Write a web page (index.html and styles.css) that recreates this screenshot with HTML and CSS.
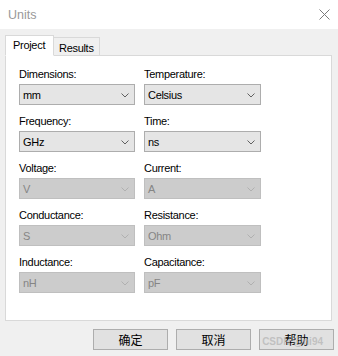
FILE: index.html
```html
<!DOCTYPE html>
<html lang="en">
<head>
    <meta charset="UTF-8">
    <meta name="viewport" content="width=device-width, initial-scale=1.0">
    <title>Units</title>
    <link rel="stylesheet" href="styles.css">
</head>
<body>
    <div class="titlebar">
        <span class="title">Units</span>
        <svg class="close" width="11" height="11" viewBox="0 0 11 11">
            <path d="M0.5 0.5 L10.5 10.5 M10.5 0.5 L0.5 10.5" stroke="#7a7a7a" stroke-width="1" fill="none"/>
        </svg>
    </div>
    <div class="dialog">
        <div class="tabs">
            <div class="tab active">Project</div>
            <div class="tab">Results</div>
        </div>
        <div class="panel">
            <div class="fields">
                <div class="field">
                    <label>Dimensions:</label>
                    <div class="combo"><span>mm</span><svg class="chev" width="8" height="5" viewBox="0 0 8 5"><polyline points="0.5,0.5 4,4 7.5,0.5"/></svg></div>
                </div>
                <div class="field">
                    <label>Temperature:</label>
                    <div class="combo"><span>Celsius</span><svg class="chev" width="8" height="5" viewBox="0 0 8 5"><polyline points="0.5,0.5 4,4 7.5,0.5"/></svg></div>
                </div>
                <div class="field">
                    <label>Frequency:</label>
                    <div class="combo"><span>GHz</span><svg class="chev" width="8" height="5" viewBox="0 0 8 5"><polyline points="0.5,0.5 4,4 7.5,0.5"/></svg></div>
                </div>
                <div class="field">
                    <label>Time:</label>
                    <div class="combo"><span>ns</span><svg class="chev" width="8" height="5" viewBox="0 0 8 5"><polyline points="0.5,0.5 4,4 7.5,0.5"/></svg></div>
                </div>
                <div class="field">
                    <label>Voltage:</label>
                    <div class="combo disabled"><span>V</span><svg class="chev" width="8" height="5" viewBox="0 0 8 5"><polyline points="0.5,0.5 4,4 7.5,0.5"/></svg></div>
                </div>
                <div class="field">
                    <label>Current:</label>
                    <div class="combo disabled"><span>A</span><svg class="chev" width="8" height="5" viewBox="0 0 8 5"><polyline points="0.5,0.5 4,4 7.5,0.5"/></svg></div>
                </div>
                <div class="field">
                    <label>Conductance:</label>
                    <div class="combo disabled"><span>S</span><svg class="chev" width="8" height="5" viewBox="0 0 8 5"><polyline points="0.5,0.5 4,4 7.5,0.5"/></svg></div>
                </div>
                <div class="field">
                    <label>Resistance:</label>
                    <div class="combo disabled"><span>Ohm</span><svg class="chev" width="8" height="5" viewBox="0 0 8 5"><polyline points="0.5,0.5 4,4 7.5,0.5"/></svg></div>
                </div>
                <div class="field">
                    <label>Inductance:</label>
                    <div class="combo disabled"><span>nH</span><svg class="chev" width="8" height="5" viewBox="0 0 8 5"><polyline points="0.5,0.5 4,4 7.5,0.5"/></svg></div>
                </div>
                <div class="field">
                    <label>Capacitance:</label>
                    <div class="combo disabled"><span>pF</span><svg class="chev" width="8" height="5" viewBox="0 0 8 5"><polyline points="0.5,0.5 4,4 7.5,0.5"/></svg></div>
                </div>
            </div>
        </div>
        <div class="buttons">
            <button type="button">确定</button>
            <button type="button">取消</button>
            <button type="button">帮助</button>
            <span class="watermark">CSDN @ni94</span>
        </div>
    </div>
</body>
</html>
```

FILE: styles.css
```css
body {
    margin: 0;
    width: 338px;
    height: 356px;
    background-color: #f0f0f0;
    font-family: "Liberation Sans", Arial, sans-serif;
    font-size: 11px;
    letter-spacing: -0.3px;
    color: #000;
    overflow: hidden;
}
.titlebar {
    height: 29px;
    background-color: #fff;
    display: flex;
    align-items: center;
    justify-content: space-between;
    padding: 0 8px 0 8px;
}
.title {
    font-size: 12.5px;
    letter-spacing: 0;
    color: #999;
}
.close {
    display: block;
    margin-top: -1px;
}
.dialog {
    padding: 6px 4px 0 5px;
}
.tabs {
    display: flex;
    align-items: flex-end;
    height: 21px;
    position: relative;
    z-index: 1;
}
.tab {
    box-sizing: border-box;
    height: 19px;
    padding: 4px 5px 0 5px;
    line-height: 13px;
    border: 1px solid #d9d9d9;
    background-color: #f0f0f0;
    margin-left: -1px;
}
.tab.active {
    height: 21px;
    width: 49px;
    padding: 3px 0 0 7px;
    margin-left: 0;
    background-color: #fff;
    border-bottom-color: #fff;
    position: relative;
    z-index: 2;
}
.panel {
    box-sizing: border-box;
    width: 327px;
    height: 266px;
    margin-top: -1px;
    background-color: #fff;
    border: 1px solid #d9d9d9;
    padding: 12px 0 0 13px;
}
.fields {
    display: grid;
    grid-template-columns: 116px 117px;
    column-gap: 9px;
    row-gap: 10px;
}
.field label {
    display: block;
    line-height: 13px;
    margin-bottom: 3px;
}
.combo {
    box-sizing: border-box;
    height: 21px;
    border: 1px solid #adadad;
    background-color: #e5e5e5;
    display: flex;
    align-items: center;
    justify-content: space-between;
    padding: 1px 5px 0 3px;
}
.chev {
    display: block;
    fill: none;
    stroke: #606060;
    stroke-width: 1;
}
.combo.disabled {
    background-color: #cccccc;
    border-color: #bfbfbf;
    color: #858585;
}
.combo.disabled .chev {
    stroke: #b0b0b0;
}
.buttons {
    position: relative;
    display: flex;
    justify-content: flex-end;
    gap: 8px;
    margin-top: 8px;
}
.buttons button {
    box-sizing: border-box;
    width: 75px;
    height: 21px;
    padding: 0;
    border: 1px solid #adadad;
    background-color: #e1e1e1;
    font-family: "Noto Sans CJK SC", sans-serif;
    font-size: 12px;
    line-height: 19px;
    color: #000;
}
.watermark {
    position: absolute;
    right: 11px;
    top: 7px;
    font-family: "Liberation Sans", Arial, sans-serif;
    font-size: 10px;
    font-weight: bold;
    letter-spacing: 0;
    color: rgba(170, 170, 170, 0.6);
    pointer-events: none;
}
```
